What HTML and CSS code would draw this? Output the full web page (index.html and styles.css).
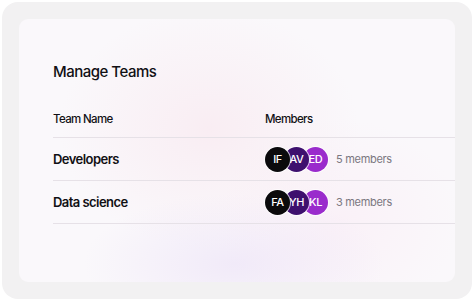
FILE: index.html
```html
<!DOCTYPE html>
<html lang="en">
<head>
  <meta charset="UTF-8" />
  <meta name="viewport" content="width=device-width, initial-scale=1.0"/>
  <title>Manage Teams</title>
  <link rel="stylesheet" href="styles.css">
</head>
<body>

  <!-- outer frame -->
  <div class="frame">
    <div class="card">
      <h1 class="card-title">Manage Teams</h1>

      <div class="teams">
        <div class="team-row team-head">
          <div class="col-name">Team Name</div>
          <div class="col-members">Members</div>
        </div>

        <div class="team-row">
          <div class="col-name team-name">Developers</div>
          <div class="col-members">
            <div class="avatars">
              <span class="avatar av-black">IF</span>
              <span class="avatar av-plum">AV</span>
              <span class="avatar av-violet">ED</span>
            </div>
            <span class="member-count">5 members</span>
          </div>
        </div>

        <div class="team-row">
          <div class="col-name team-name">Data science</div>
          <div class="col-members">
            <div class="avatars">
              <span class="avatar av-black">FA</span>
              <span class="avatar av-plum">YH</span>
              <span class="avatar av-violet">KL</span>
            </div>
            <span class="member-count">3 members</span>
          </div>
        </div>
      </div>
    </div>
  </div>

</body>
</html>
```

FILE: styles.css
```css
html, body {
  margin: 0;
  padding: 0;
  background: #ffffff;
  font-family: 'Inter', 'Noto Sans', sans-serif;
  color: #111014;
}

.frame {
  margin: 2px;
  width: 470px;
  height: 297px;
  box-sizing: border-box;
  padding: 17px;
  background: #f2f1f2;
  border-radius: 16px;
}

.card {
  height: 100%;
  box-sizing: border-box;
  padding: 43px 0 0 34px;
  border-radius: 9px;
  background:
    radial-gradient(ellipse 150px 70px at 215px 245px, rgba(232, 220, 246, 0.5), transparent),
    radial-gradient(ellipse 150px 120px at 190px 110px, rgba(248, 228, 236, 0.55), transparent),
    radial-gradient(ellipse 120px 100px at 320px 200px, rgba(250, 230, 242, 0.4), transparent),
    #faf8fb;
}

.card-title {
  margin: 0;
  font-size: 15px;
  line-height: 20px;
  font-weight: 500;
  letter-spacing: -0.5px;
}

.teams {
  margin-top: 19px;
}

.team-row {
  display: flex;
  align-items: center;
  height: 42px;
  border-bottom: 1px solid #e6e1e7;
}

.team-head {
  height: 36px;
  font-size: 11.5px;
  font-weight: 500;
  letter-spacing: -0.65px;
}

.col-name {
  width: 212px;
}

.col-members {
  display: flex;
  align-items: center;
  gap: 8px;
}

.team-name {
  font-size: 13px;
  font-weight: 600;
  letter-spacing: -0.55px;
}

.avatars {
  display: flex;
}

.avatar {
  width: 25px;
  height: 25px;
  border-radius: 50%;
  display: flex;
  align-items: center;
  justify-content: center;
  color: #ffffff;
  font-size: 11px;
  font-weight: 500;
  letter-spacing: -0.4px;
  box-shadow: 0 0 0 1px rgba(255, 255, 255, 0.7);
}

.avatar + .avatar {
  margin-left: -6px;
}

.av-black {
  background: #0b0a0c;
  z-index: 3;
}

.av-plum {
  background: #3e106e;
  z-index: 2;
}

.av-violet {
  background: #9a2bcc;
  z-index: 1;
}

.member-count {
  font-size: 11px;
  letter-spacing: -0.3px;
  color: #7b7780;
}
```
